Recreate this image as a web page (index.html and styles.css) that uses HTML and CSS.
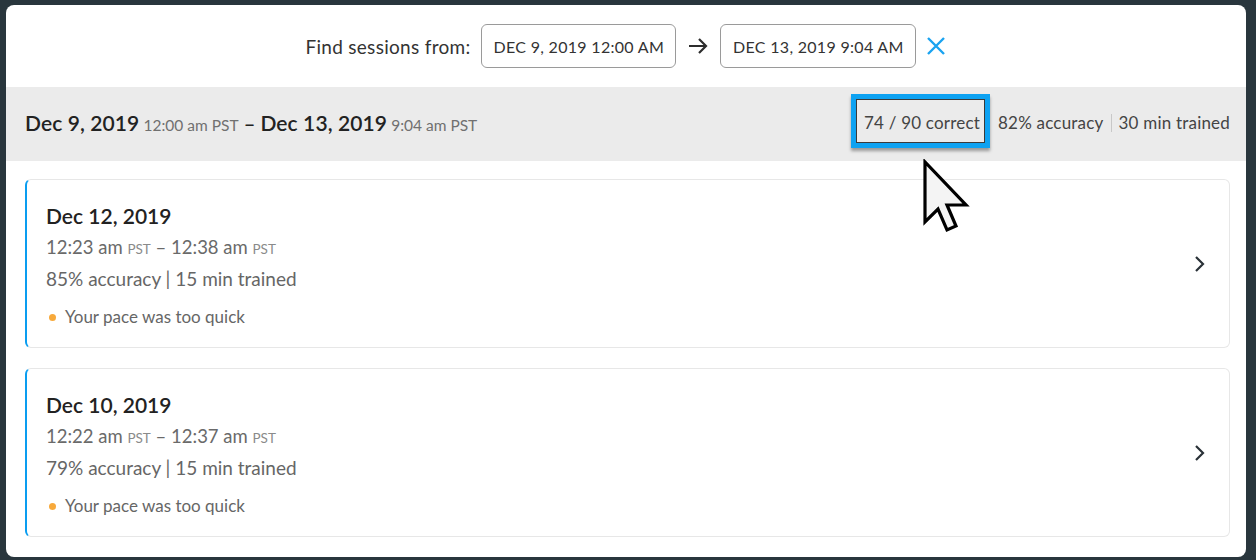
FILE: index.html
```html
<!DOCTYPE html>
<html lang="en">
<head>
<meta charset="utf-8">
<title>Sessions</title>
<link rel="stylesheet" href="styles.css">
</head>
<body>
<div class="panel">
  <div class="finder">
    <span class="finder-label">Find sessions from:</span>
    <div class="date-box">DEC 9, 2019 12:00 AM</div>
    <svg class="arrow" width="22" height="20" viewBox="0 0 22 20"><path d="M2 10h17M12 3l7 7-7 7" fill="none" stroke="#2d2d2d" stroke-width="2.2"/></svg>
    <div class="date-box">DEC 13, 2019 9:04 AM</div>
    <svg class="clear" width="20" height="20" viewBox="0 0 20 20"><path d="M2 2l16 16M18 2L2 18" fill="none" stroke="#1aa3f0" stroke-width="2.4"/></svg>
  </div>
  <div class="summary">
    <div class="range">
      <span class="range-date">Dec 9, 2019</span> <span class="range-time">12:00 am PST</span>
      <span class="range-dash">–</span>
      <span class="range-date">Dec 13, 2019</span> <span class="range-time">9:04 am PST</span>
    </div>
    <div class="stats">
      <div class="highlight"><span class="highlight-inner">74 / 90 correct</span></div>
      <span class="stat">82% accuracy</span>
      <span class="sep"></span>
      <span class="stat">30 min trained</span>
    </div>
  </div>
  <div class="list">
    <div class="card">
      <div class="card-body">
        <div class="card-title">Dec 12, 2019</div>
        <div class="card-time">12:23 am <span class="tz">PST</span> – 12:38 am <span class="tz">PST</span></div>
        <div class="card-stats">85% accuracy | 15 min trained</div>
        <div class="card-note"><span class="dot"></span>Your pace was too quick</div>
      </div>
      <svg class="chevron" width="12" height="18" viewBox="0 0 12 18"><path d="M2 2l7 7-7 7" fill="none" stroke="#2a3238" stroke-width="2.2"/></svg>
    </div>
    <div class="card">
      <div class="card-body">
        <div class="card-title">Dec 10, 2019</div>
        <div class="card-time">12:22 am <span class="tz">PST</span> – 12:37 am <span class="tz">PST</span></div>
        <div class="card-stats">79% accuracy | 15 min trained</div>
        <div class="card-note"><span class="dot"></span>Your pace was too quick</div>
      </div>
      <svg class="chevron" width="12" height="18" viewBox="0 0 12 18"><path d="M2 2l7 7-7 7" fill="none" stroke="#2a3238" stroke-width="2.2"/></svg>
    </div>
  </div>
  <svg class="cursor" width="50" height="76" viewBox="0 0 50 76"><path d="M3 3V63L16 50L25 71L34 67L25 46L44 46Z" fill="#f4f4f4" stroke="#000" stroke-width="3.2" stroke-linejoin="miter"/></svg>
</div>
</body>
</html>
```

FILE: styles.css
```css
* { box-sizing: border-box; }
html, body { margin: 0; padding: 0; }
body {
  background: #29363d;
  font-family: Lato, "Open Sans", sans-serif;
  color: #333;
  width: 1256px;
  height: 560px;
  overflow: hidden;
}
.panel {
  position: relative;
  margin: 5px 10px 0 6px;
  height: 552px;
  background: #fff;
  border-radius: 8px;
  overflow: hidden;
}
.finder {
  height: 82px;
  display: flex;
  align-items: center;
  justify-content: center;
  gap: 10px;
  padding-right: 1px;
}
.finder-label {
  font-size: 19px;
  letter-spacing: 0.3px;
  color: #333;
}
.date-box {
  height: 44px;
  border: 1px solid #9a9a9a;
  border-radius: 6px;
  padding: 0 11px 0 12px;
  display: flex;
  align-items: center;
  font-size: 16px;
  color: #333;
  letter-spacing: 0.3px;
}
.arrow { margin: 0 1px; }
.summary {
  height: 74px;
  background: #ebebeb;
  display: flex;
  align-items: center;
  justify-content: space-between;
  padding: 0 16px 0 19px;
}
.range { padding-bottom: 4px; }
.range-date {
  font-size: 21px;
  font-weight: 600;
  color: #222;
  letter-spacing: 0.1px;
}
.range-time {
  font-size: 15.5px;
  color: #707070;
}
.range-dash {
  font-size: 20px;
  font-weight: 600;
  color: #222;
  margin: 0 1px;
}
.stats {
  display: flex;
  align-items: center;
  font-size: 17px;
  letter-spacing: 0.2px;
  color: #444;
}
.stat { padding-bottom: 3px; }
.highlight {
  border: 5px solid #0da2f2;
  box-shadow: 0 3px 3px rgba(0,0,0,0.35);
  margin: 0 8px 6px 0;
}
.highlight-inner {
  display: block;
  border: 1px solid #3a3a3a;
  padding: 3px 4px 0 7px;
  line-height: 39px;
}
.sep {
  width: 1px;
  height: 18px;
  background: #c8c8c8;
  margin: 0 7px 3px;
}
.list {
  display: flex;
  flex-direction: column;
  gap: 20px;
  padding: 18px 16px 0 19px;
}
.card {
  height: 169px;
  border: 1px solid #e7e7e7;
  border-left: 2px solid #0a9df0;
  border-radius: 6px;
  display: flex;
  align-items: center;
  justify-content: space-between;
  padding: 0 23px 0 19px;
}
.card-body {
  align-self: flex-start;
  padding-top: 22px;
}
.card-title {
  font-size: 21px;
  font-weight: 600;
  color: #222;
  line-height: 28px;
}
.card-time {
  font-size: 18.5px;
  color: #6a6a6a;
  line-height: 30px;
  margin-top: 2px;
}
.tz {
  font-size: 13.5px;
  color: #8a8a8a;
}
.card-stats {
  font-size: 19px;
  color: #666;
  line-height: 32px;
  margin-top: -1px;
}
.card-note {
  font-size: 17px;
  color: #666;
  line-height: 20px;
  margin-top: 12px;
  display: flex;
  align-items: center;
}
.dot {
  width: 7px;
  height: 7px;
  border-radius: 50%;
  background: #f7a93b;
  margin: 0 9px 0 3px;
}
.cursor {
  position: absolute;
  left: 916px;
  top: 154px;
}
```
